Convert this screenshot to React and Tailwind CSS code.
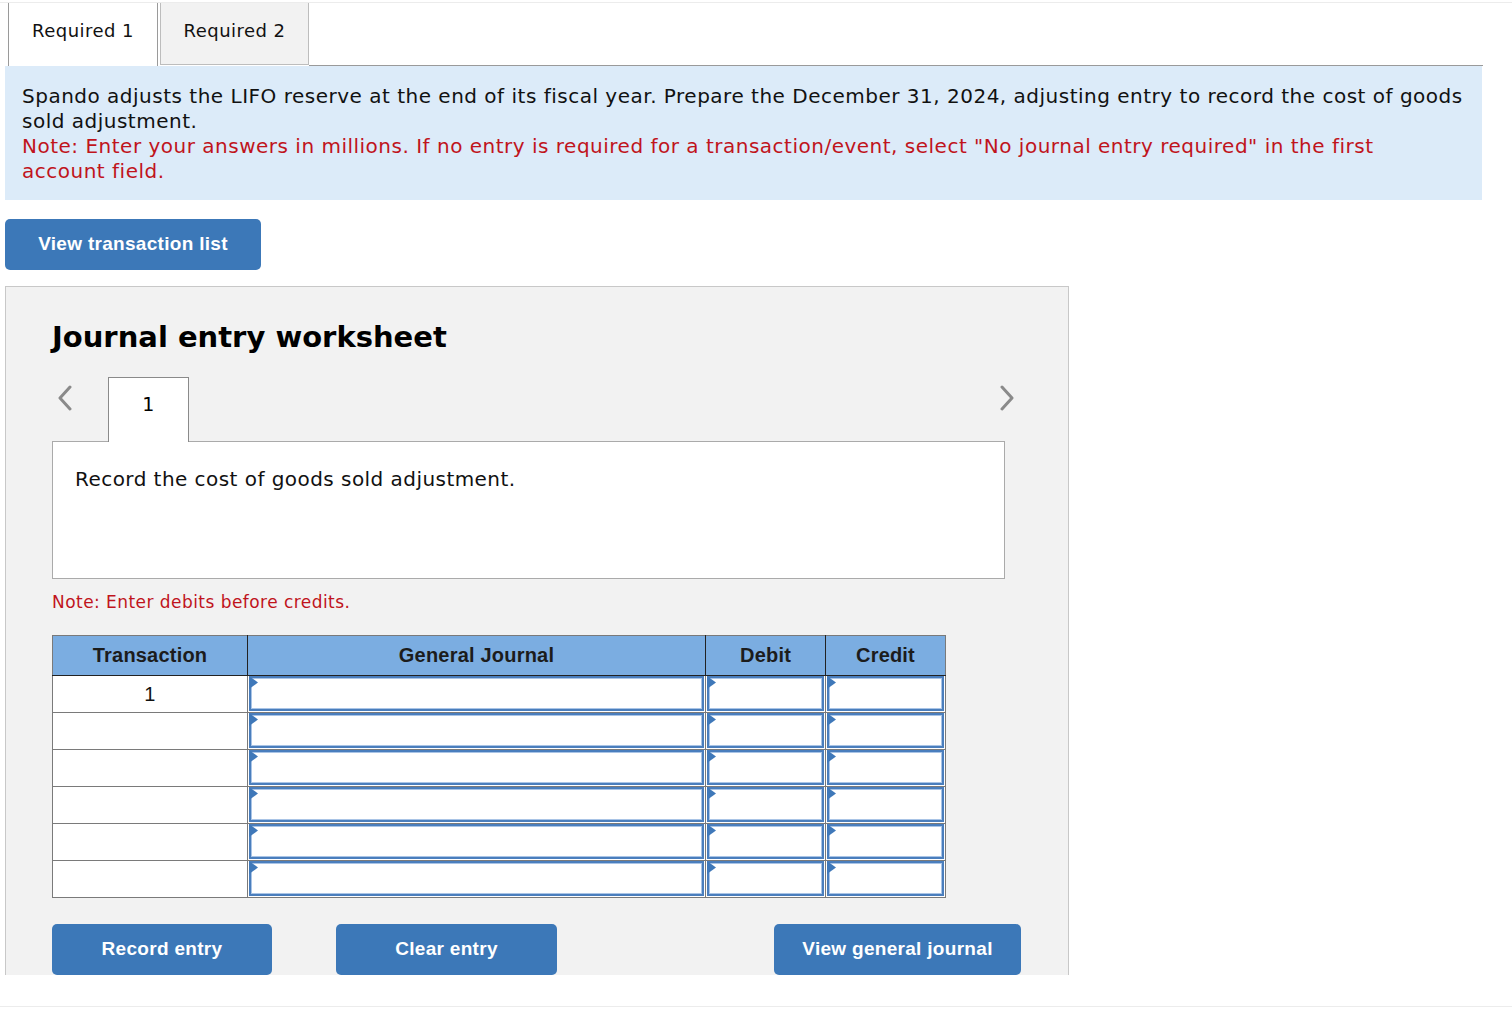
import React from "react";

const verdana = { fontFamily: '"DejaVu Sans", Verdana, sans-serif' };
const arial = { fontFamily: '"Liberation Sans", Arial, sans-serif' };

function Cell() {
  return (
    <td className="border border-[#7a7a7a] p-0 h-[37px]">
      <div className="relative h-[35px] mx-[1px] border-2 border-[#4a7ebd] bg-white shadow-[inset_0_0_0_1px_#a9c4e6]">
        <svg className="absolute -left-[2px] -top-[2px]" width="10" height="13" viewBox="0 0 10 13">
          <polygon points="0,0 9,6.5 0,13" fill="#3f78b9" />
        </svg>
      </div>
    </td>
  );
}

function Chevron({ dir }) {
  return (
    <svg width="18" height="26" viewBox="0 0 18 26" fill="none">
      {dir === "left" ? (
        <polyline points="14,2 4,13 14,24" stroke="#8a8a8a" strokeWidth="3" strokeLinecap="round" strokeLinejoin="round" />
      ) : (
        <polyline points="4,2 14,13 4,24" stroke="#8a8a8a" strokeWidth="3" strokeLinecap="round" strokeLinejoin="round" />
      )}
    </svg>
  );
}

export default function App() {
  const rows = [1, 2, 3, 4, 5, 6];
  return (
    <div className="w-[1512px] h-[1010px] bg-white relative overflow-hidden tracking-[0.45px]" style={verdana}>
      <div className="h-[3px] border-b border-[#ececec]" />
      {/* Tabs */}
      <div className="flex pl-[8px] h-[63px]">
        <div className="w-[150px] h-[63px] bg-white border-l border-r border-[#9a9a9a] flex items-center justify-center text-[18px] text-[#111] pb-[8px]">
          Required 1
        </div>
        <div className="ml-[2px] w-[149px] h-[62px] bg-[#f2f2f2] border-l border-r border-b border-[#bdbdbd] flex items-center justify-center text-[18px] text-[#111] pb-[7px]">
          Required 2
        </div>
        <div className="w-[1174px] h-[63px] border-b border-[#9a9a9a]" />
      </div>
      {/* Instructions */}
      <div className="ml-[5px] w-[1477px] bg-[#dcebf9] pl-[17px] pr-[10px] pt-[18px] pb-[16px] text-[20px] leading-[25px] text-[#111] tracking-[0.5px]">
        <p>
          Spando adjusts the LIFO reserve at the end of its fiscal year. Prepare the December 31, 2024, adjusting entry to record the cost of goods sold adjustment.
        </p>
        <p className="text-[#c0141c] pr-[30px]">
          Note: Enter your answers in millions. If no entry is required for a transaction/event, select "No journal entry required" in the first account field.
        </p>
      </div>
      {/* View transaction list */}
      <div className="ml-[5px] mt-[19px]">
        <button
          className="w-[256px] h-[51px] rounded-[5px] bg-[#3c78b8] text-white text-[19px] font-bold tracking-[0.3px]"
          style={arial}
        >
          View transaction list
        </button>
      </div>
      {/* Worksheet */}
      <div className="ml-[5px] mt-[16px] w-[1064px] h-[700px] bg-[#f2f2f2] border border-[#c8c8c8] pl-[46px] pt-[30px]">
        <h2 className="text-[29px] font-bold text-black leading-[40px] tracking-normal">Journal entry worksheet</h2>
        <div className="mt-[20px] w-[970px] flex items-start">
          <div className="w-[56px] h-[64px] flex items-start pt-[8px] pl-[4px]">
            <Chevron dir="left" />
          </div>
          <div className="w-[81px] h-[65px] bg-white border border-b-0 border-[#8a8a8a] flex justify-center pt-[12px] text-[19px] text-black relative z-10">
            1
          </div>
          <div className="flex-1" />
          <div className="w-[24px] h-[64px] flex items-start pt-[8px]">
            <Chevron dir="right" />
          </div>
        </div>
        <div className="-mt-px w-[953px] h-[138px] bg-white border border-[#aaaaaa] px-[22px] pt-[22px] text-[20px] text-[#111]">
          Record the cost of goods sold adjustment.
        </div>
        <p className="mt-[11px] text-[17px] text-[#c0141c]">Note: Enter debits before credits.</p>
        <table className="mt-[19px] border-collapse border border-[#7a7a7a] tracking-[0.2px]" style={arial}>
          <thead>
            <tr className="bg-[#7badE1] h-[40px] text-[20px] font-bold text-[#1c1c1c]">
              <th className="w-[195px] border border-[#222] border-t-[#7a7a7a] border-l-[#7a7a7a] font-bold">Transaction</th>
              <th className="w-[458px] border border-[#222] border-t-[#7a7a7a] font-bold">General Journal</th>
              <th className="w-[120px] border border-[#222] border-t-[#7a7a7a] font-bold">Debit</th>
              <th className="w-[120px] border border-[#222] border-t-[#7a7a7a] border-r-[#7a7a7a] font-bold">Credit</th>
            </tr>
          </thead>
          <tbody>
            {rows.map((r) => (
              <tr key={r} className="bg-white">
                <td className="border border-[#7a7a7a] h-[37px] text-center text-[20px] text-[#111] align-middle">
                  {r === 1 ? "1" : ""}
                </td>
                <Cell />
                <Cell />
                <Cell />
              </tr>
            ))}
          </tbody>
        </table>
        <div className="mt-[26px] flex text-white text-[19px] font-bold tracking-[0.3px]" style={arial}>
          <button className="w-[220px] h-[51px] rounded-[5px] bg-[#3c78b8]">Record entry</button>
          <button className="ml-[64px] w-[221px] h-[51px] rounded-[5px] bg-[#3c78b8]">Clear entry</button>
          <button className="ml-[217px] w-[247px] h-[51px] rounded-[5px] bg-[#3c78b8]">View general journal</button>
        </div>
      </div>
      <div className="absolute left-0 right-0 top-[975px] h-[32px] bg-white border-b border-[#ececec]" />
    </div>
  );
}
